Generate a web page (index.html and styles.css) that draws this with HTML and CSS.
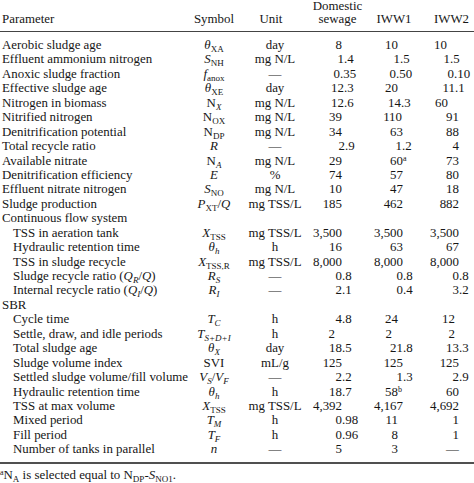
FILE: index.html
```html
<!DOCTYPE html>
<html>
<head>
<meta charset="utf-8">
<link rel="stylesheet" href="styles.css">
</head>
<body>
<table class="tbl">
<colgroup>
<col class="c-par"><col class="c-sym"><col class="c-unit"><col class="c-dom"><col class="c-i1"><col class="c-i2">
</colgroup>
<thead>
<tr>
<th class="h-par">Parameter</th>
<th class="h-sym">Symbol</th>
<th class="h-unit">Unit</th>
<th class="h-dom">Domestic<br>sewage</th>
<th class="h-i1">IWW1</th>
<th class="h-i2">IWW2</th>
</tr>
</thead>
<tbody>
<tr class="first"><td class="p">Aerobic sludge age</td><td class="s"><i>θ</i><sub>XA</sub></td><td class="u">day</td><td class="v"><span class="i">8</span></td><td class="v"><span class="i m5">10</span></td><td class="v"><span class="i m12">10</span></td></tr>
<tr><td class="p">Effluent ammonium nitrogen</td><td class="s"><i>S</i><sub>NH</sub></td><td class="u">mg N/L</td><td class="v"><span class="i a2">1</span>.4</td><td class="v"><span class="i m3">1</span>.5</td><td class="v"><span class="i m9">1</span>.5</td></tr>
<tr><td class="p">Anoxic sludge fraction</td><td class="s"><i>f</i><sub>anox</sub></td><td class="u">—</td><td class="v"><span class="i m2">0</span>.35</td><td class="v"><span class="i m7">0</span>.50</td><td class="v"><span class="i m5">0</span>.10</td></tr>
<tr><td class="p">Effective sludge age</td><td class="s"><i>θ</i><sub>XE</sub></td><td class="u">day</td><td class="v"><span class="i a2">12</span>.3</td><td class="v"><span class="i m5">20</span></td><td class="v"><span class="i m4">11</span>.1</td></tr>
<tr><td class="p">Nitrogen in biomass</td><td class="s">N<sub><i>X</i></sub></td><td class="u">mg N/L</td><td class="v"><span class="i a2">12</span>.6</td><td class="v"><span class="i m2">14</span>.3</td><td class="v"><span class="i m11">60</span></td></tr>
<tr><td class="p">Nitrified nitrogen</td><td class="s">N<sub>OX</sub></td><td class="u">mg N/L</td><td class="v"><span class="i">39</span></td><td class="v"><span class="i m1">110</span></td><td class="v"><span class="i">91</span></td></tr>
<tr><td class="p">Denitrification potential</td><td class="s">N<sub>DP</sub></td><td class="u">mg N/L</td><td class="v"><span class="i">34</span></td><td class="v"><span class="i">63</span></td><td class="v"><span class="i">88</span></td></tr>
<tr><td class="p">Total recycle ratio</td><td class="s"><i>R</i></td><td class="u">—</td><td class="v"><span class="i a3">2</span>.9</td><td class="v"><span class="i m1">1</span>.2</td><td class="v"><span class="i">4</span></td></tr>
<tr><td class="p">Available nitrate</td><td class="s">N<sub><i>A</i></sub></td><td class="u">mg N/L</td><td class="v"><span class="i">29</span></td><td class="v"><span class="i">60</span><sup>a</sup></td><td class="v"><span class="i">73</span></td></tr>
<tr><td class="p">Denitrification efficiency</td><td class="s"><i>E</i></td><td class="u">%</td><td class="v"><span class="i">74</span></td><td class="v"><span class="i">57</span></td><td class="v"><span class="i">80</span></td></tr>
<tr><td class="p">Effluent nitrate nitrogen</td><td class="s"><i>S</i><sub>NO</sub></td><td class="u">mg N/L</td><td class="v"><span class="i">10</span></td><td class="v"><span class="i">47</span></td><td class="v"><span class="i">18</span></td></tr>
<tr><td class="p">Sludge production</td><td class="s"><i>P</i><sub>XT</sub>/<i>Q</i></td><td class="u">mg TSS/L</td><td class="v"><span class="i">185</span></td><td class="v"><span class="i">462</span></td><td class="v"><span class="i">882</span></td></tr>
<tr><td class="p">Continuous flow system</td><td class="s"></td><td class="u"></td><td class="v"></td><td class="v"></td><td class="v"></td></tr>
<tr><td class="p sub-p">TSS in aeration tank</td><td class="s"><i>X</i><sub>TSS</sub></td><td class="u">mg TSS/L</td><td class="v"><span class="i">3,500</span></td><td class="v"><span class="i">3,500</span></td><td class="v"><span class="i">3,500</span></td></tr>
<tr><td class="p sub-p">Hydraulic retention time</td><td class="s"><i>θ<sub>h</sub></i></td><td class="u">h</td><td class="v"><span class="i">16</span></td><td class="v"><span class="i">63</span></td><td class="v"><span class="i">67</span></td></tr>
<tr><td class="p sub-p">TSS in sludge recycle</td><td class="s"><i>X</i><sub>TSS,R</sub></td><td class="u">mg TSS/L</td><td class="v"><span class="i">8,000</span></td><td class="v"><span class="i">8,000</span></td><td class="v"><span class="i">8,000</span></td></tr>
<tr><td class="p sub-p">Sludge recycle ratio (<i>Q<sub>R</sub></i>/<i>Q</i>)</td><td class="s"><i>R<sub>S</sub></i></td><td class="u">—</td><td class="v"><span class="i">0</span>.8</td><td class="v"><span class="i">0</span>.8</td><td class="v"><span class="i">0</span>.8</td></tr>
<tr><td class="p sub-p">Internal recycle ratio (<i>Q<sub>I</sub></i>/<i>Q</i>)</td><td class="s"><i>R<sub>I</sub></i></td><td class="u">—</td><td class="v"><span class="i">2</span>.1</td><td class="v"><span class="i">0</span>.4</td><td class="v"><span class="i">3</span>.2</td></tr>
<tr><td class="p">SBR</td><td class="s"></td><td class="u"></td><td class="v"></td><td class="v"></td><td class="v"></td></tr>
<tr><td class="p sub-p">Cycle time</td><td class="s"><i>T<sub>C</sub></i></td><td class="u">h</td><td class="v"><span class="i">4</span>.8</td><td class="v"><span class="i m5">24</span></td><td class="v"><span class="i m4">12</span></td></tr>
<tr><td class="p sub-p">Settle, draw, and idle periods</td><td class="s"><i>T<sub>S+D+I</sub></i></td><td class="u">h</td><td class="v"><span class="i m7">2</span></td><td class="v"><span class="i m11">2</span></td><td class="v"><span class="i m4">2</span></td></tr>
<tr><td class="p sub-p">Total sludge age</td><td class="s"><i>θ<sub>X</sub></i></td><td class="u">day</td><td class="v"><span class="i">18</span>.5</td><td class="v"><span class="i">21</span>.8</td><td class="v"><span class="i">13</span>.3</td></tr>
<tr><td class="p sub-p">Sludge volume index</td><td class="s">SVI</td><td class="u">mL/g</td><td class="v"><span class="i">125</span></td><td class="v"><span class="i">125</span></td><td class="v"><span class="i">125</span></td></tr>
<tr><td class="p sub-p">Settled sludge volume/fill volume</td><td class="s"><i>V<sub>S</sub></i>/<i>V<sub>F</sub></i></td><td class="u">—</td><td class="v"><span class="i">2</span>.2</td><td class="v"><span class="i">1</span>.3</td><td class="v"><span class="i">2</span>.9</td></tr>
<tr><td class="p sub-p">Hydraulic retention time</td><td class="s"><i>θ<sub>h</sub></i></td><td class="u">h</td><td class="v"><span class="i">18</span>.7</td><td class="v"><span class="i m5">58</span><sup>b</sup></td><td class="v"><span class="i">60</span></td></tr>
<tr><td class="p sub-p">TSS at max volume</td><td class="s"><i>X</i><sub>TSS</sub></td><td class="u">mg TSS/L</td><td class="v"><span class="i">4,392</span></td><td class="v"><span class="i">4,167</span></td><td class="v"><span class="i">4,692</span></td></tr>
<tr><td class="p sub-p">Mixed period</td><td class="s"><i>T<sub>M</sub></i></td><td class="u">h</td><td class="v"><span class="i">0</span>.98</td><td class="v"><span class="i m5">11</span></td><td class="v"><span class="i">1</span></td></tr>
<tr><td class="p sub-p">Fill period</td><td class="s"><i>T<sub>F</sub></i></td><td class="u">h</td><td class="v"><span class="i">0</span>.96</td><td class="v"><span class="i m5">8</span></td><td class="v"><span class="i">1</span></td></tr>
<tr class="last"><td class="p sub-p">Number of tanks in parallel</td><td class="s"><i>n</i></td><td class="u">—</td><td class="v"><span class="i">5</span></td><td class="v"><span class="i m5">3</span></td><td class="v"><span class="i">—</span></td></tr>
</tbody>
</table>
<p class="note"><sup>a</sup>N<sub>A</sub> is selected equal to N<sub>DP</sub>-<i>S</i><sub>NO1</sub>.</p>
</body>
</html>
```
FILE: styles.css
```css
html, body {
  margin: 0;
  padding: 0;
  background: #ffffff;
}
body {
  width: 474px;
  height: 483px;
  overflow: hidden;
  font-family: "Liberation Serif", "Times New Roman", serif;
  font-size: 12.9px;
  color: #161616;
}
.tbl {
  width: 474px;
  table-layout: fixed;
  border-collapse: collapse;
  border-spacing: 0;
}
.c-par { width: 190px; }
.c-sym { width: 48px; }
.c-unit { width: 74px; }
.c-dom { width: 61px; }
.c-i1 { width: 56px; }
.c-i2 { width: 45px; }

.tbl th {
  font-weight: normal;
  line-height: 13px;
  padding: 0 0 5px 0;
  vertical-align: bottom;
  text-align: center;
  border-bottom: 1px solid #444;
  white-space: nowrap;
}
.tbl th.h-par { text-align: left; padding-left: 2px; }
.tbl th.h-unit { padding-right: 8px; }
.tbl th.h-dom { padding-right: 10px; }
.tbl th.h-i1 { padding-right: 14px; }

.tbl td {
  padding: 0;
  line-height: 14.43px;
  height: 14.43px;
  vertical-align: top;
  white-space: nowrap;
}
.tbl tr.first td { padding-top: 6px; }
.tbl tr.last td { padding-bottom: 5px; border-bottom: 2px solid #505050; }

.p { text-align: left; padding-left: 2px !important; }
.p.sub-p { padding-left: 13px !important; }
.s { text-align: center; }
.u { text-align: center; }
.v { text-align: left; overflow: visible; }

.i {
  display: inline-block;
  width: 30px;
  text-align: right;
}
.i.a2 { width: 32px; }
.i.a3 { width: 33px; }
.i.m1 { width: 29px; }
.i.m2 { width: 28px; }
.i.m3 { width: 27px; }
.i.m4 { width: 26px; }
.i.m5 { width: 25px; }
.i.m7 { width: 23px; }
.i.m9 { width: 21px; }
.i.m11 { width: 19px; }
.i.m12 { width: 18px; }

sub {
  font-size: 70%;
  line-height: 0;
  vertical-align: -0.28em;
}
sup {
  font-size: 62%;
  line-height: 0;
  vertical-align: 0.55em;
}
i { font-style: italic; }

.note {
  margin: 4px 0 0 0;
  padding-left: 0;
  line-height: 14px;
}
```
